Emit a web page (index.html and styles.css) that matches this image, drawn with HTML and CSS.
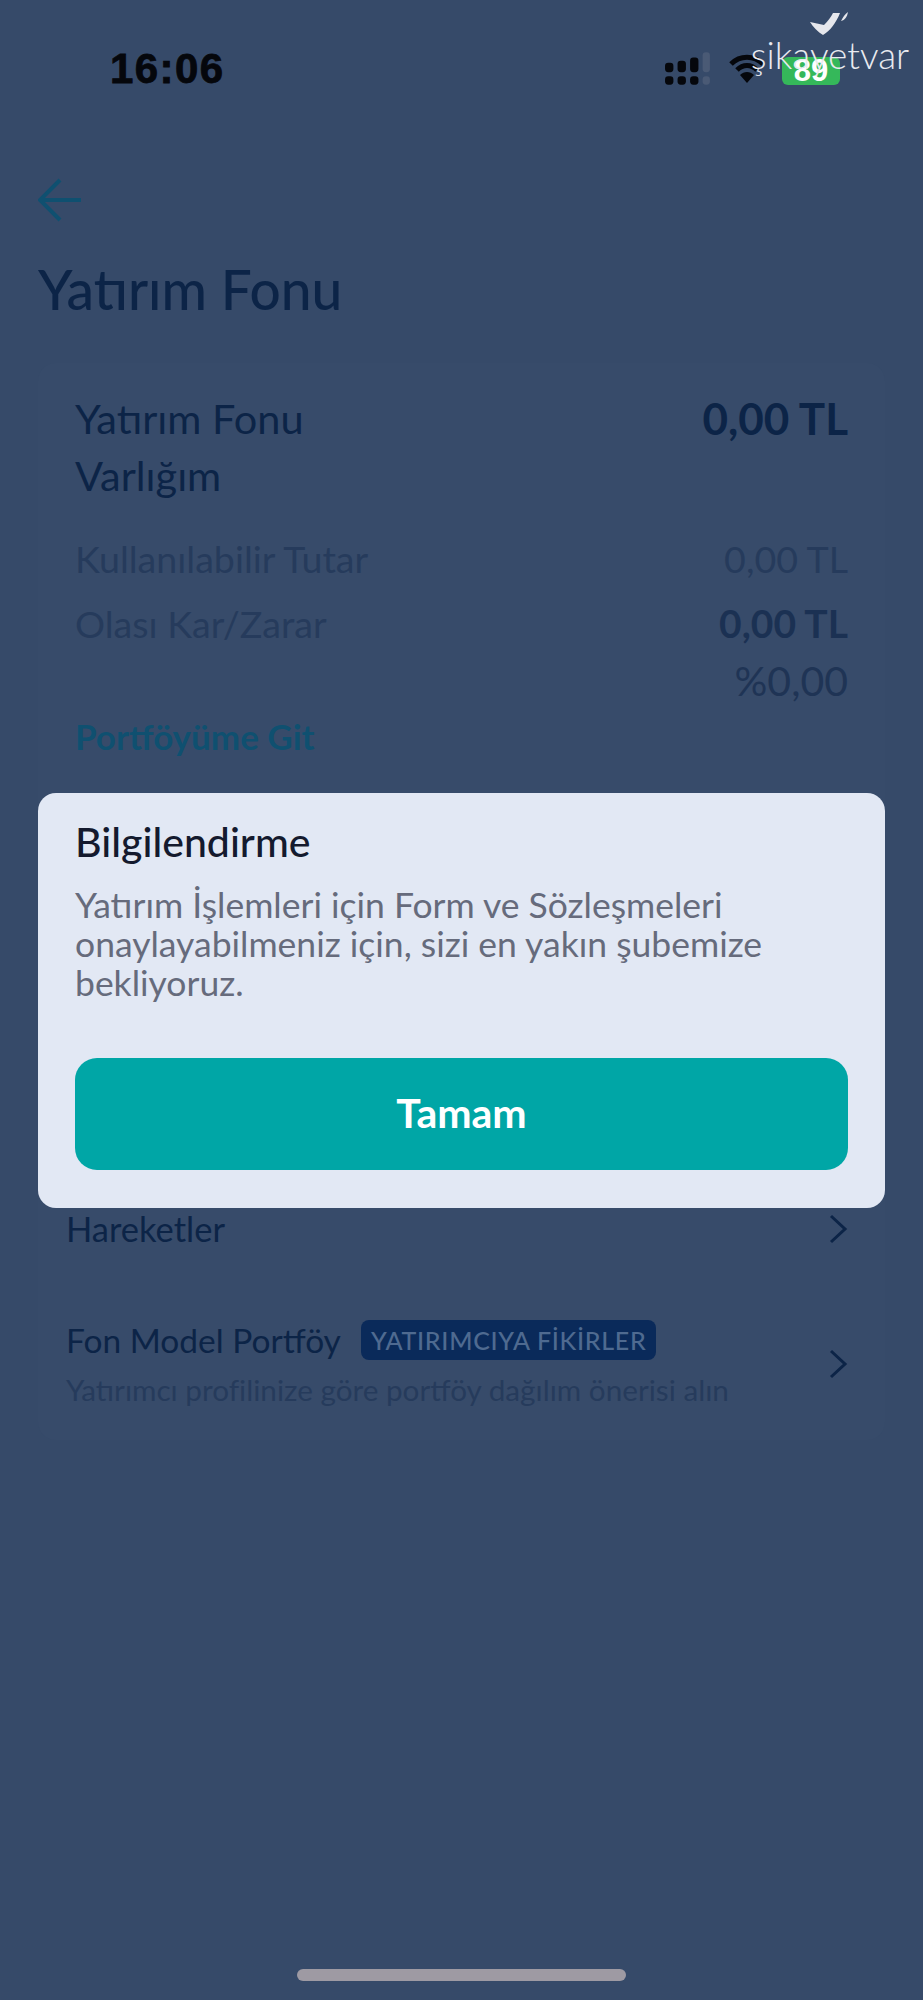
FILE: index.html
```html
<!DOCTYPE html>
<html lang="tr">
<head>
    <meta charset="UTF-8">
    <meta name="viewport" content="width=device-width, initial-scale=1.0">
    <title>Yatırım Fonu</title>
    <link rel="stylesheet" href="styles.css">
</head>
<body>
    <div class="screen">
        <div class="status">
            <span class="time">16:06</span>
            <div class="status-icons">
                <svg class="signal" width="48" height="36" viewBox="0 0 46 34">
                    <g fill="#05070c">
                        <rect x="1" y="11" width="8" height="9" rx="3"/>
                        <rect x="1" y="24" width="8" height="8" rx="3"/>
                        <rect x="13" y="9" width="8" height="11" rx="3"/>
                        <rect x="13" y="24" width="8" height="8" rx="3"/>
                        <rect x="25" y="6" width="8" height="14" rx="3"/>
                        <rect x="25" y="24" width="8" height="8" rx="3"/>
                    </g>
                    <g fill="#4a5a75">
                        <rect x="37" y="1" width="7" height="19" rx="3"/>
                        <rect x="37" y="24" width="7" height="8" rx="3"/>
                    </g>
                </svg>
                <svg class="wifi" width="36" height="30" viewBox="0 0 36 30">
                    <path d="M2 10 C11 1 25 1 34 10" fill="none" stroke="#05070c" stroke-width="5"/>
                    <path d="M8 16 C14 10 22 10 28 16" fill="none" stroke="#05070c" stroke-width="5"/>
                    <path d="M11 21 L18 29 L25 21 C21 17 15 17 11 21 Z" fill="#05070c"/>
                </svg>
                <div class="battery">89</div>
            </div>
        </div>

        <div class="watermark">
            <svg width="38" height="24" viewBox="0 0 38 24">
                <path d="M0 10 L14 13 C18 9 21 5 23 1 L30 1 C26 11 20 19 13 23 C8 20 3 15 0 10 Z" fill="#e6e7ec"/>
                <path d="M31 9 C33 5 35 2 38 0 C37 5 35 8 31 9 Z" fill="#e6e7ec"/>
            </svg>
            <span>şikayetvar</span>
        </div>

        <a class="back">
            <svg width="44" height="44" viewBox="0 0 44 44">
                <path d="M43 22 H3 M22 2 L2 22 L22 42" fill="none" stroke="#0f5070" stroke-width="4"/>
            </svg>
        </a>
        <h1>Yatırım Fonu</h1>

        <div class="card">
            <div class="summary">
                <div class="row row-main">
                    <span class="label-main">Yatırım Fonu<br>Varlığım</span>
                    <span class="amount-main">0,00 TL</span>
                </div>
                <div class="row row-sub">
                    <span>Kullanılabilir Tutar</span>
                    <span>0,00 TL</span>
                </div>
                <div class="row row-sub">
                    <span>Olası Kar/Zarar</span>
                    <span class="amount-stack"><b>0,00 TL</b><br><span class="percent">%0,00</span></span>
                </div>
                <a class="link">Portföyüme Git</a>
            </div>

            <div class="menu">
                <div class="menu-item menu-first">
                    <span class="menu-title">Hareketler</span>
                    <svg class="chevron" width="20" height="30" viewBox="0 0 20 30">
                        <path d="M3 2 L17 15 L3 28" fill="none" stroke="#0c2447" stroke-width="3"/>
                    </svg>
                </div>
                <div class="menu-item">
                    <div>
                        <div class="menu-head">
                            <span class="menu-title">Fon Model Portföy</span>
                            <span class="badge">YATIRIMCIYA FİKİRLER</span>
                        </div>
                        <div class="menu-desc">Yatırımcı profilinize göre portföy dağılım önerisi alın</div>
                    </div>
                    <svg class="chevron" width="20" height="30" viewBox="0 0 20 30">
                        <path d="M3 2 L17 15 L3 28" fill="none" stroke="#0c2447" stroke-width="3"/>
                    </svg>
                </div>
            </div>
        </div>

        <div class="dialog">
            <h2>Bilgilendirme</h2>
            <p>Yatırım İşlemleri için Form ve Sözleşmeleri onaylayabilmeniz için, sizi en yakın şubemize bekliyoruz.</p>
            <button class="ok">Tamam</button>
        </div>

        <div class="home-bar"></div>
    </div>
</body>
</html>
```

FILE: styles.css
```css
* {
    box-sizing: border-box;
}
body {
    margin: 0;
    padding: 0;
    background-color: #364a69;
    font-family: Lato, "Liberation Sans", sans-serif;
}
.screen {
    position: relative;
    width: 923px;
    height: 2000px;
    overflow: hidden;
    padding: 0 38px;
}
.status {
    display: flex;
    justify-content: space-between;
    align-items: flex-start;
    height: 178px;
    padding: 46px 45px 0 72px;
}
.time {
    font-family: "Liberation Sans", sans-serif;
    font-weight: bold;
    font-size: 42px;
    line-height: 46px;
    letter-spacing: 1.4px;
    -webkit-text-stroke: 0.8px #05070c;
    color: #05070c;
}
.status-icons {
    display: flex;
    align-items: flex-start;
    gap: 17px;
    padding-top: 7px;
}
.signal {
    margin-top: -2px;
}
.wifi {
    margin-top: 1px;
}
.battery {
    width: 58px;
    height: 28px;
    margin-top: 4px;
    background: #35b85a;
    border-radius: 6px;
    color: #fff;
    font-family: "Liberation Sans", sans-serif;
    font-weight: bold;
    font-size: 31px;
    line-height: 28px;
    text-align: center;
}
.watermark {
    position: absolute;
    left: 750px;
    top: 12px;
    width: 160px;
    text-align: center;
    white-space: nowrap;
    color: #e9eaf0;
}
.watermark svg {
    display: block;
    margin-left: 60px;
}
.watermark span {
    display: block;
    font-family: Lato, sans-serif;
    font-weight: 300;
    font-size: 37px;
    line-height: 38px;
}
.back {
    display: block;
    height: 44px;
}
h1 {
    margin: 35px 0 0;
    font-size: 55px;
    line-height: 64px;
    font-weight: 500;
    color: #0c2447;
}
.card {
    margin-top: 42px;
    height: 1077px;
    background: #374b6a;
    border-radius: 18px;
}
.summary {
    padding: 27px 37px 0;
    height: 843px;
}
.row {
    display: flex;
    justify-content: space-between;
}
.row-main {
    font-size: 41.5px;
    line-height: 57px;
    color: #0c2447;
}
.amount-main {
    font-size: 44px;
    font-weight: bold;
}
.row-sub {
    margin-top: 8px;
    font-size: 37.6px;
    line-height: 57px;
    color: #263b5c;
}
.row-main + .row-sub {
    margin-top: 26px;
}
.amount-stack {
    text-align: right;
}
.amount-stack b {
    font-size: 39px;
    color: #1b3153;
}
.percent {
    font-size: 41px;
    color: #1f3455;
}
.link {
    display: block;
    margin-top: 3px;
    font-size: 35px;
    line-height: 46px;
    font-weight: bold;
    color: #0f5070;
}
.menu {
    padding: 0 37px 0 28px;
}
.menu-item {
    display: flex;
    justify-content: space-between;
    align-items: center;
}
.menu-first {
    height: 46px;
    margin-bottom: 68px;
}
.menu-first .menu-title {
    font-size: 34.5px;
}
.menu-head {
    display: flex;
    align-items: center;
    gap: 20px;
}
.menu-title {
    font-size: 33.5px;
    line-height: 40px;
    color: #0c2447;
}
.badge {
    padding: 0 10px;
    height: 40px;
    background: #0a2a5a;
    border-radius: 8px;
    color: #4f6a90;
    font-size: 25px;
    line-height: 40px;
    font-weight: 500;
    letter-spacing: 0.7px;
}
.menu-desc {
    margin-top: 12px;
    font-size: 29.7px;
    line-height: 36px;
    white-space: nowrap;
    color: #263b5c;
}
.dialog {
    position: absolute;
    left: 38px;
    top: 793px;
    width: 847px;
    height: 415px;
    padding: 24px 37px;
    background: #e2e8f4;
    border-radius: 18px;
}
.dialog h2 {
    margin: 0;
    font-size: 41px;
    line-height: 50px;
    font-weight: 500;
    color: #141a2e;
}
.dialog p {
    margin: 18px 0 0;
    font-size: 35.5px;
    line-height: 39px;
    color: #666b7c;
}
.ok {
    display: block;
    width: 773px;
    height: 112px;
    margin-top: 56px;
    padding-bottom: 4px;
    border: 0;
    border-radius: 22px;
    background: #00a6a6;
    color: #fff;
    font-family: inherit;
    font-size: 41px;
    font-weight: bold;
}
.home-bar {
    position: absolute;
    left: 297px;
    bottom: 19px;
    width: 329px;
    height: 12px;
    background: #9e9aa3;
    border-radius: 6px;
}
```
